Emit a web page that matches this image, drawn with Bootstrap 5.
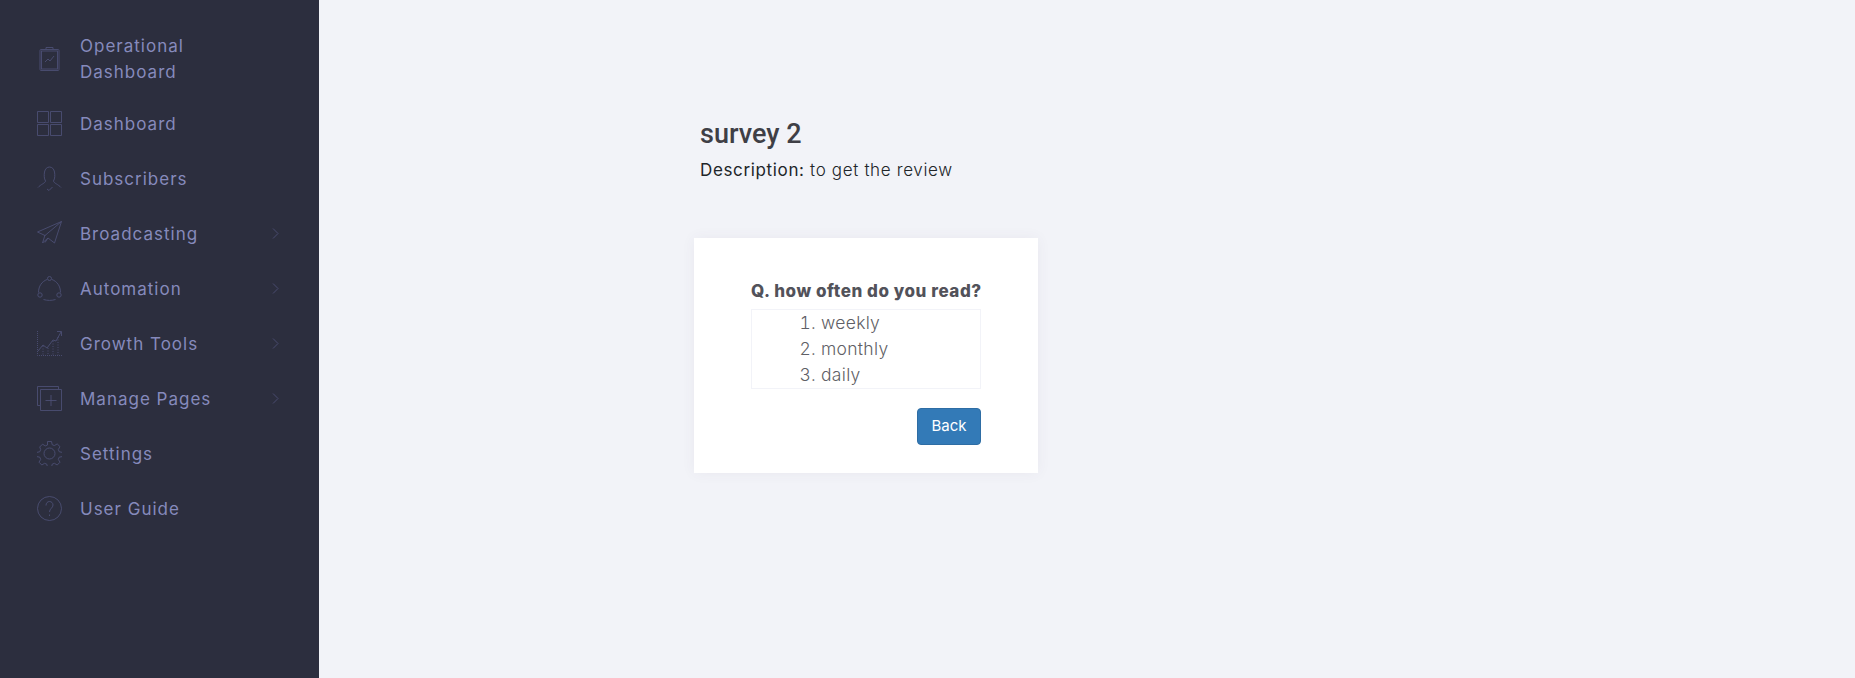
<!DOCTYPE html>
<html lang="en">
<head>
  <meta charset="UTF-8" />
  <meta name="viewport" content="width=device-width, initial-scale=1">
  <title>Survey</title>
  <link href="https://cdn.jsdelivr.net/npm/bootstrap@5.3.0/dist/css/bootstrap.min.css" rel="stylesheet">
  <style>
    body {
      background: #f2f3f8;
      font-family: "Inter", "Liberation Sans", sans-serif;
      overflow: hidden;
    }
    .app-shell { height: 678px; }
    .side-menu {
      width: 319px;
      background: #2c2e3e;
      padding-top: 27px;
    }
    .side-item {
      display: flex;
      align-items: center;
      padding: 0 37px;
      min-height: 55px;
      color: #868abc;
      font-size: 17px;
      line-height: 26px;
      letter-spacing: 1px;
      text-decoration: none;
    }
    .side-item.two-line { min-height: 63px; margin-bottom: 6px; }
    .side-item svg.ico {
      width: 25px;
      height: 25px;
      flex: none;
      margin-right: 18px;
      fill: none;
      stroke: #4c4f74;
      stroke-width: .9;
    }
    .side-item svg.arrow {
      width: 7px;
      height: 11px;
      flex: none;
      margin-left: auto;
      margin-right: 3px;
      fill: none;
      stroke: #4c4f74;
      stroke-width: .9;
    }
    .survey-wrap {
      padding: 117px 0 0 375px;
    }
    .survey-head { padding-left: 6px; }
    .survey-title {
      font-family: Roboto, sans-serif;
      font-weight: 500;
      font-size: 27px;
      line-height: 34px;
      color: #3f3f46;
      margin: 0 0 7px;
    }
    .survey-desc {
      font-size: 17px;
      line-height: 24px;
      letter-spacing: .65px;
      color: #212529;
      margin: 0;
    }
    .survey-desc span { font-weight: 300; }
    .survey-card {
      width: 344px;
      height: 235px;
      margin-top: 56px;
      padding: 41px 57px 0;
      background: #fff;
      box-shadow: 0 0 13px rgba(82, 63, 105, .06);
    }
    .question {
      font-weight: 800;
      font-size: 17px;
      line-height: 24px;
      letter-spacing: .55px;
      color: #52525a;
      margin: 0 0 6px;
      white-space: nowrap;
    }
    .answers {
      border: 1px solid #f2f3f8;
      margin: 0 0 19px;
      padding: 0 0 0 69px;
      font-weight: 300;
      font-size: 17.5px;
      line-height: 26px;
      letter-spacing: .3px;
      color: #5f5f66;
    }
    .back-btn {
      background: #337ab7;
      border: 1px solid #2e6da4;
      border-radius: 4px;
      color: #fff;
      font-size: 15px;
      padding: 0;
      width: 64px;
      height: 37px;
    }
  </style>
</head>
<body>

<div class="app-shell d-flex">
  <nav class="side-menu flex-shrink-0">
    <a class="side-item two-line" href="#">
      <svg class="ico" viewBox="0 0 25 25"><rect x="3" y="3.500" width="19" height="21" rx="1"/><rect x="4.500" y="5" width="16" height="18"/><path d="M9 3.500V1.500h7v2M8 16l3-3 2 2 4-5"/></svg>
      <span>Operational<br>Dashboard</span>
    </a>
    <a class="side-item" href="#">
      <svg class="ico" viewBox="0 0 25 25"><path d="M.5.5h11v11H.5zM13.500.5h11v11h-11zM.5 13.500h11v11H.5zM13.500 13.500h11v11h-11z"/></svg>
      <span>Dashboard</span>
    </a>
    <a class="side-item" href="#">
      <svg class="ico" viewBox="0 0 25 25"><path d="M8.500 15C7 12.500 7 9 7.500 6c.5-3 2.500-5 5-5s4.500 2 5 5c.5 3 .5 6.500-1 9 0 2 5 3.500 7.500 6.500M8.500 15c0 2-5 3.500-7.500 6.500M10 23l2 1.500 3.500-3.500"/></svg>
      <span>Subscribers</span>
    </a>
    <a class="side-item" href="#">
      <svg class="ico" viewBox="0 0 25 25"><path d="M24.500.5L.5 11l7.500 3.500L24.500.5 17.500 22l-6.500-5-5 4.500-.5.500 2.500-8M11 17l-3 4.500"/></svg>
      <span>Broadcasting</span>
      <svg class="arrow" viewBox="0 0 7 11"><path d="M1 .5l5 5-5 5"/></svg>
    </a>
    <a class="side-item" href="#">
      <svg class="ico" viewBox="0 0 25 25"><circle cx="12.500" cy="2.500" r="2"/><circle cx="3" cy="19" r="2.200"/><circle cx="22" cy="19" r="2.200"/><path d="M10 3.500C5 5.500 1.500 10 1.500 16.500M15 3.500c5 2 8.500 6.500 8.500 13M6.500 23.500c4 1.200 8 1.200 12 0"/></svg>
      <span>Automation</span>
      <svg class="arrow" viewBox="0 0 7 11"><path d="M1 .5l5 5-5 5"/></svg>
    </a>
    <a class="side-item" href="#">
      <svg class="ico" viewBox="0 0 25 25"><path d="M.5 0v24.500H25" stroke-dasharray="1 1"/><path d="M1 20l5-6 4 3 6-8 3 1 5-9M20 .5h4.500V5"/><path stroke-dasharray="1 1.500" d="M6 15v9M11 17v7M16 10v14M21 6v18"/></svg>
      <span>Growth Tools</span>
      <svg class="arrow" viewBox="0 0 7 11"><path d="M1 .5l5 5-5 5"/></svg>
    </a>
    <a class="side-item" href="#">
      <svg class="ico" viewBox="0 0 25 25"><path d="M3 19.500H.5V.5h21V3"/><path d="M3.500 3.500h21v21h-21zM14 9v11M8.500 14.500h11"/></svg>
      <span>Manage Pages</span>
      <svg class="arrow" viewBox="0 0 7 11"><path d="M1 .5l5 5-5 5"/></svg>
    </a>
    <a class="side-item" href="#">
      <svg class="ico" viewBox="0 0 25 25"><circle cx="12.500" cy="12.500" r="5.500"/><path d="M10.500.5h4l.7 3.200 2.200.9 2.800-1.700 2.800 2.800-1.700 2.800.9 2.200 3.300.8v4l-3.300.7-.9 2.200 1.700 2.800-2.800 2.800-2.800-1.700-2.200.9-.7 3.300h-4l-.7-3.300-2.200-.9-2.800 1.700-2.800-2.800 1.700-2.800-.9-2.200-3.300-.7v-4l3.300-.8.9-2.200L2.700 6l2.800-2.800 2.800 1.700 2.200-.9z"/></svg>
      <span>Settings</span>
    </a>
    <a class="side-item" href="#">
      <svg class="ico" viewBox="0 0 25 25"><circle cx="12.500" cy="12.500" r="12"/><path d="M9 9.500c0-2.500 1.500-4 3.500-4s3.500 1.500 3.500 3.500c0 3-3.500 3.500-3.500 7M12.500 18.500v1.500"/></svg>
      <span>User Guide</span>
    </a>
  </nav>

  <main class="survey-wrap flex-grow-1">
    <div class="survey-head">
      <h1 class="survey-title">survey 2</h1>
      <p class="survey-desc">Description: <span>to get the review</span></p>
    </div>
    <div class="survey-card">
      <p class="question">Q. how often do you read?</p>
      <ol class="answers">
        <li>weekly</li>
        <li>monthly</li>
        <li>daily</li>
      </ol>
      <div class="d-flex justify-content-end">
        <button class="btn back-btn" type="button">Back</button>
      </div>
    </div>
  </main>
</div>

<script src="https://cdn.jsdelivr.net/npm/bootstrap@5.3.0/dist/js/bootstrap.bundle.min.js"></script>
</body>
</html>
